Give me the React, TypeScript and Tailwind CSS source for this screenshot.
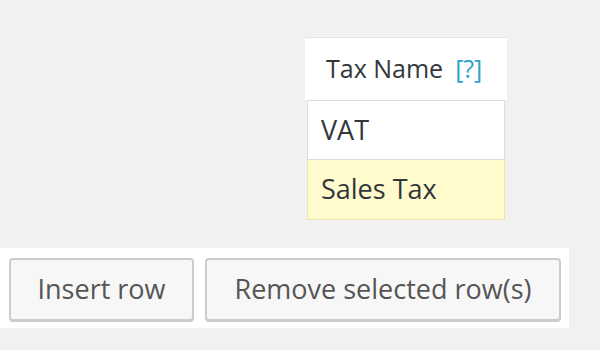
const App = () => {
  return (
    <div
      className="w-[600px] h-[350px] bg-[#f1f1f1] overflow-hidden flex flex-col"
      style={{ fontFamily: '"Open Sans", sans-serif' }}
    >
      {/* table */}
      <div className="ml-[305px] mt-[37px] w-[202px] flex flex-col">
        <div className="h-[63px] bg-white border-t border-[#e5e5e5] flex items-center pl-[21px] text-[25px] text-[#32373c]">
          <span>Tax Name</span>
          <span className="ml-[12px] text-[#2ea2cc]">[?]</span>
        </div>
        <div className="mx-[2px] h-[60px] bg-white border border-[#dddddd] flex items-center pl-[13px] text-[27px] text-[#32373c]">
          VAT
        </div>
        <div className="mx-[2px] h-[60px] bg-[#fffbcc] border-x border-b border-[#ebe4a8] flex items-center pl-[13px] text-[27px] text-[#32373c]">
          Sales Tax
        </div>
      </div>

      {/* buttons */}
      <div className="mt-[28px] w-[569px] h-[80px] bg-white flex items-start gap-[11px] pl-[9px] pt-[10px]">
        <button className="w-[185px] h-[63px] rounded-[4px] border-2 border-[#cccccc] bg-[#f7f7f7] shadow-[0_1px_0_#ccc] text-[27px] text-[#555555]">
          Insert row
        </button>
        <button className="w-[356px] h-[63px] rounded-[4px] border-2 border-[#cccccc] bg-[#f7f7f7] shadow-[0_1px_0_#ccc] text-[27px] text-[#555555]">
          Remove selected row(s)
        </button>
      </div>
    </div>
  );
};

export default App;
